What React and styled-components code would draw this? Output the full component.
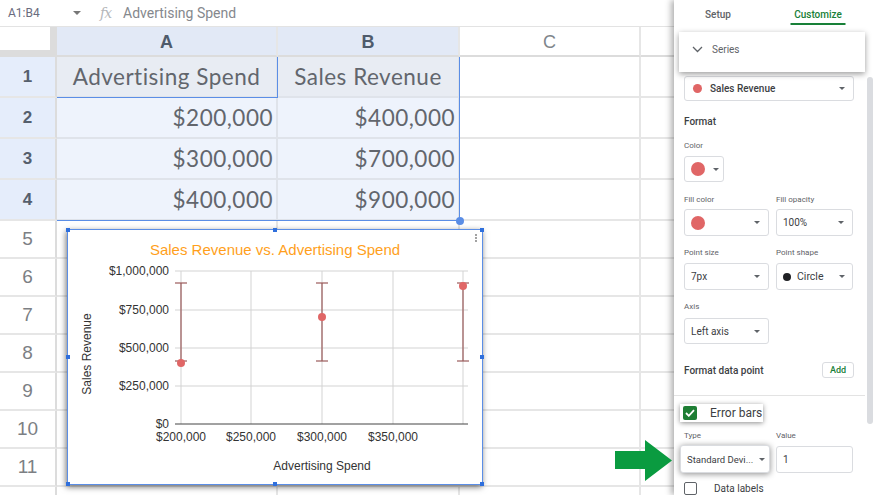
import React from "react";
import styled, { createGlobalStyle } from "styled-components";

const GlobalStyle = createGlobalStyle`
  html, body { margin: 0; padding: 0; width: 880px; height: 495px; overflow: hidden; background: #fff; }
  body { font-family: Roboto, "Liberation Sans", sans-serif; }
  * { box-sizing: border-box; }
`;

const Page = styled.div`
  display: flex;
  width: 880px;
  height: 495px;
  overflow: hidden;
  position: relative;
`;

const SheetArea = styled.div`
  flex: 1;
  min-width: 0;
  position: relative;
  overflow: hidden;
`;

const FormulaBar = styled.div`
  height: 27px;
  display: flex;
  align-items: center;
  border-bottom: 1px solid #e3e3e3;
  font-family: Roboto, "Liberation Sans", sans-serif;
`;

const NameBox = styled.div`
  width: 70px;
  padding-left: 8px;
  font-size: 12px;
  color: #6a6c7e;
`;

const Caret = styled.span`
  display: inline-block;
  flex: none;
  width: 0;
  height: 0;
  border-left: ${(p) => p.$size || 3}px solid transparent;
  border-right: ${(p) => p.$size || 3}px solid transparent;
  border-top: ${(p) => p.$size || 3}px solid ${(p) => p.$color || "#5f6368"};
`;

const NameCaret = styled.div`
  width: 30px;
  display: flex;
  padding-left: 3px;
`;

const Fx = styled.span`
  font-family: "DejaVu Serif", serif;
  font-style: italic;
  font-size: 14px;
  color: #b5b7ba;
  width: 23px;
  letter-spacing: -1px;
`;

const FormulaText = styled.span`
  font-size: 14px;
  color: #85888d;
`;

const Grid = styled.div`
  display: grid;
  grid-template-columns: 57px 221px 182px 181px 220px;
  grid-template-rows: 30px repeat(4, 41px) repeat(8, 38px);
`;

const Cell = styled.div`
  border-right: 2px solid #e6e6e6;
  border-bottom: 2px solid #e6e6e6;
  display: flex;
  align-items: center;
  overflow: hidden;
  white-space: nowrap;
`;

const Corner = styled(Cell)`
  background: #fff;
  border-right: 7px solid #dcdcdc;
  border-bottom: 7px solid #dcdcdc;
`;

const ColHead = styled(Cell)`
  justify-content: center;
  background: ${(p) => (p.$sel ? "#e2e9f6" : "#fff")};
  border-bottom-color: #dcdcdc;
  font-family: "Liberation Sans", Arial, sans-serif;
  font-size: 18px;
  font-weight: ${(p) => (p.$sel ? 700 : 400)};
  color: ${(p) => (p.$sel ? "#4f5b6b" : "#80868b")};
  padding-top: 2px;
`;

const RowHead = styled(Cell)`
  justify-content: center;
  background: ${(p) => (p.$sel ? "#e5edfb" : "#fff")};
  border-right-color: #dcdcdc;
  font-family: "Liberation Sans", Arial, sans-serif;
  font-size: ${(p) => (p.$sel ? 17 : 19)}px;
  font-weight: ${(p) => (p.$sel ? 700 : 400)};
  color: ${(p) => (p.$sel ? "#555f6d" : "#7c7f84")};
`;

const DataCell = styled(Cell)`
  background: ${(p) => (p.$tone === "head" ? "#e8ecf3" : p.$tone === "sel" ? "#eef3fc" : "#fff")};
  border-color: ${(p) => (p.$tone ? "#dfe3ea" : "#e6e6e6")};
  justify-content: ${(p) => (p.$align === "right" ? "flex-end" : "center")};
  padding-right: ${(p) => (p.$align === "right" ? 3 : 0)}px;
  font-family: Lato, "Open Sans", sans-serif;
  font-size: 22.5px;
  letter-spacing: 0.5px;
  color: #62666d;
`;

const Selection = styled.div`
  position: absolute;
  left: 57px;
  top: 57px;
  width: ${(p) => p.$w}px;
  height: ${(p) => p.$h}px;
  border-right: 1px solid #5b8ee6;
  border-bottom: 1px solid #5b8ee6;
  pointer-events: none;
`;

const FillDot = styled.div`
  position: absolute;
  left: 456px;
  top: 217px;
  width: 8px;
  height: 8px;
  border-radius: 50%;
  background: #5b8ee6;
`;

const ChartBox = styled.div`
  position: absolute;
  left: 67px;
  top: 229px;
  width: 416px;
  height: 256px;
  background: #fff;
  border: 1px solid #5b8ee6;
  box-shadow: -1px 2px 6px rgba(0, 0, 0, 0.55);
`;

const Handle = styled.div`
  position: absolute;
  width: 4px;
  height: 4px;
  background: #2f6fdc;
  left: ${(p) => p.$x}%;
  top: ${(p) => p.$y}%;
  transform: translate(-50%, -50%);
`;

const Panel = styled.div`
  width: 206px;
  flex: none;
  position: relative;
  background: #fff;
  box-shadow: -3px 0 6px rgba(0, 0, 0, 0.3);
  z-index: 2;
  font-family: Roboto, "Liberation Sans", sans-serif;
  color: #202124;
`;

const Tabs = styled.div`
  display: grid;
  grid-template-columns: 88px 112px;
  height: 32px;
`;

const Tab = styled.div`
  position: relative;
  text-align: center;
  font-size: 10px;
  font-weight: 500;
  line-height: 30px;
  color: ${(p) => (p.$active ? "#188038" : "#5f6368")};
  &::after {
    content: "";
    display: ${(p) => (p.$active ? "block" : "none")};
    position: absolute;
    left: 50%;
    transform: translateX(-50%);
    top: 23px;
    width: 55px;
    height: 2px;
    background: #188038;
  }
`;

const SeriesCard = styled.div`
  margin-left: 5px;
  width: 186px;
  height: 40px;
  display: flex;
  align-items: center;
  gap: 9px;
  padding-left: 13px;
  padding-bottom: 5px;
  background: #fff;
  box-shadow: 0 2px 6px rgba(0, 0, 0, 0.4);
  font-size: 10px;
  color: #5f6368;
  position: relative;
  z-index: 1;
`;

const Content = styled.div`
  padding: 4px 0 0 10px;
  width: 180px;
  display: flex;
  flex-direction: column;
`;

const Select = styled.div`
  height: ${(p) => p.$h || 27}px;
  width: ${(p) => p.$w}px;
  margin-left: ${(p) => p.$ml || 0}px;
  border: 1px solid #dadce0;
  border-radius: 3px;
  display: flex;
  align-items: center;
  gap: ${(p) => (p.$gap != null ? p.$gap : 8)}px;
  padding: 0 8px 0 ${(p) => p.$pl || 6}px;
  font-size: ${(p) => p.$fs || 10}px;
  font-weight: ${(p) => p.$fw || 400};
  color: #3c4043;
  background: #fff;
  box-shadow: ${(p) => (p.$hl ? "0 1px 6px rgba(0,0,0,0.45)" : "none")};
  white-space: nowrap;
  overflow: hidden;
  min-width: 0;
`;

const Spacer = styled.span`
  flex: 1;
`;

const Dot = styled.span`
  width: ${(p) => p.$d}px;
  height: ${(p) => p.$d}px;
  border-radius: 50%;
  background: ${(p) => p.$c};
  flex: none;
`;

const SectionTitle = styled.div`
  margin-top: ${(p) => p.$mt}px;
  height: 14px;
  line-height: 14px;
  font-size: 10px;
  font-weight: 500;
  color: #3c4043;
`;

const Label = styled.div`
  margin-top: ${(p) => p.$mt}px;
  height: 14px;
  line-height: 14px;
  font-size: 8px;
  color: #5f6368;
`;

const Pair = styled.div`
  display: grid;
  grid-template-columns: 85px 77px;
  column-gap: 7px;
  margin-top: ${(p) => p.$mt || 0}px;
  align-items: center;
`;

const ActionRow = styled.div`
  margin-top: ${(p) => p.$mt}px;
  height: 16px;
  width: 170px;
  display: flex;
  align-items: center;
  justify-content: space-between;
  font-size: 10px;
  font-weight: 500;
  color: #3c4043;
`;

const AddButton = styled.div`
  width: 32px;
  height: 16px;
  border: 1px solid #dadce0;
  border-radius: 3px;
  display: flex;
  align-items: center;
  justify-content: center;
  font-size: 9px;
  font-weight: 500;
  color: #188038;
`;

const Divider = styled.div`
  margin-top: ${(p) => p.$mt}px;
  margin-left: -10px;
  width: 191px;
  height: 1px;
  background: #e3e3e3;
`;

const CheckRow = styled.div`
  margin-top: ${(p) => p.$mt}px;
  margin-left: ${(p) => p.$ml || 0}px;
  height: ${(p) => p.$h}px;
  width: ${(p) => p.$w}px;
  display: flex;
  align-items: center;
  gap: ${(p) => p.$gap}px;
  padding-left: ${(p) => p.$pl || 0}px;
  font-size: ${(p) => p.$fs}px;
  color: #3c4043;
  background: #fff;
  box-shadow: ${(p) => (p.$hl ? "0 1px 5px rgba(0,0,0,0.45)" : "none")};
`;

const Box = styled.span`
  width: ${(p) => p.$s}px;
  height: ${(p) => p.$s}px;
  border-radius: 2px;
  flex: none;
  display: flex;
  align-items: center;
  justify-content: center;
  background: ${(p) => (p.$on ? "#1e7e34" : "#fff")};
  border: ${(p) => (p.$on ? "none" : "1px solid #5f6368")};
`;

const ScrollThumb = styled.div`
  position: absolute;
  right: 7px;
  top: 77px;
  width: 6px;
  height: 347px;
  border-radius: 3px;
  background: #dadce0;
`;

const ArrowWrap = styled.svg`
  position: absolute;
  left: 615px;
  top: 440px;
  z-index: 3;
`;

const Chart = () => {
  const xs = [114, 184, 255, 326, 396];
  const ys = [42, 81, 119, 157];
  const yl = ["$1,000,000", "$750,000", "$500,000", "$250,000"];
  const xl = ["$200,000", "$250,000", "$300,000", "$350,000"];
  const pts = [
    [114, 134],
    [255, 88],
    [396, 57],
  ];
  const font = '"Liberation Sans", Arial, sans-serif';
  return (
    <svg width="414" height="254" viewBox="1 1 414 254" style={{ display: "block" }}>
      <text x="208" y="26" textAnchor="middle" fontFamily={font} fontSize="15" fill="#ff9f1c">
        Sales Revenue vs. Advertising Spend
      </text>
      {ys.map((y) => (
        <line key={"h" + y} x1="108" x2="401" y1={y} y2={y} stroke="#d3d3d3" strokeWidth="1" />
      ))}
      {xs.map((x) => (
        <line key={"v" + x} x1={x} x2={x} y1="42" y2="195" stroke="#d3d3d3" strokeWidth="1" />
      ))}
      <line x1="108" x2="401" y1="195" y2="195" stroke="#444" strokeWidth="1" />
      {yl.map((t, i) => (
        <text key={t} x="102" y={ys[i] + 4} textAnchor="end" fontFamily={font} fontSize="12" fill="#333">
          {t}
        </text>
      ))}
      <text x="102" y="199" textAnchor="end" fontFamily={font} fontSize="12" fill="#333">
        $0
      </text>
      {xl.map((t, i) => (
        <text key={t} x={xs[i]} y="212" textAnchor="middle" fontFamily={font} fontSize="12" fill="#333">
          {t}
        </text>
      ))}
      <text
        x="0"
        y="0"
        transform="translate(24 125) rotate(-90)"
        textAnchor="middle"
        fontFamily={font}
        fontSize="12"
        fill="#333"
      >
        Sales Revenue
      </text>
      <text x="255" y="241" textAnchor="middle" fontFamily={font} fontSize="12" fill="#333">
        Advertising Spend
      </text>
      {pts.map(([x]) => (
        <g key={"e" + x} stroke="#9a5a5a" strokeWidth="1.2">
          <line x1={x} x2={x} y1="54" y2="132" />
          <line x1={x - 6} x2={x + 6} y1="54" y2="54" />
          <line x1={x - 6} x2={x + 6} y1="132" y2="132" />
        </g>
      ))}
      {pts.map(([x, y]) => (
        <circle key={"p" + x} cx={x} cy={y} r="4" fill="#e06666" />
      ))}
      <g fill="#777">
        <circle cx="409" cy="6" r="0.9" />
        <circle cx="409" cy="9" r="0.9" />
        <circle cx="409" cy="12" r="0.9" />
      </g>
    </svg>
  );
};

export default function App() {
  const rows = [];
  const dataRows = [
    ["Advertising Spend", "Sales Revenue"],
    ["$200,000", "$400,000"],
    ["$300,000", "$700,000"],
    ["$400,000", "$900,000"],
  ];
  for (let r = 1; r <= 12; r++) {
    const sel = r <= 4;
    rows.push(
      <RowHead key={"rh" + r} $sel={sel}>
        {r <= 11 ? r : ""}
      </RowHead>
    );
    if (sel) {
      const d = dataRows[r - 1];
      const tone = r === 1 ? "head" : "sel";
      const align = r === 1 ? "center" : "right";
      rows.push(
        <DataCell key={"a" + r} $tone={tone} $align={align}>
          {d[0]}
        </DataCell>,
        <DataCell key={"b" + r} $tone={tone} $align={align}>
          {d[1]}
        </DataCell>
      );
    } else {
      rows.push(<DataCell key={"a" + r} />, <DataCell key={"b" + r} />);
    }
    rows.push(<DataCell key={"c" + r} />, <DataCell key={"d" + r} />);
  }

  return (
    <>
      <GlobalStyle />
      <Page>
        <SheetArea>
          <FormulaBar>
            <NameBox>A1:B4</NameBox>
            <NameCaret>
              <Caret $size={4} $color="#777" />
            </NameCaret>
            <Fx>fx</Fx>
            <FormulaText>Advertising Spend</FormulaText>
          </FormulaBar>
          <Grid>
            <Corner />
            <ColHead $sel>A</ColHead>
            <ColHead $sel>B</ColHead>
            <ColHead>C</ColHead>
            <ColHead />
            {rows}
          </Grid>
          <Selection $w={221} $h={41} />
          <Selection $w={403} $h={164} />
          <FillDot />
          <ChartBox>
            <Chart />
            <Handle $x={0} $y={0} />
            <Handle $x={50} $y={0} />
            <Handle $x={100} $y={0} />
            <Handle $x={0} $y={50} />
            <Handle $x={100} $y={50} />
            <Handle $x={0} $y={100} />
            <Handle $x={50} $y={100} />
            <Handle $x={100} $y={100} />
          </ChartBox>
        </SheetArea>
        <Panel>
          <Tabs>
            <Tab>Setup</Tab>
            <Tab $active>Customize</Tab>
          </Tabs>
          <SeriesCard>
            <svg width="11" height="7" viewBox="0 0 11 7">
              <polyline points="1,1 5.5,5.5 10,1" fill="none" stroke="#5f6368" strokeWidth="1.3" />
            </svg>
            <span>Series</span>
          </SeriesCard>
          <Content>
            <Select $w={170} $h={25} $pl={8} $fw={500}>
              <Dot $d={9} $c="#e06666" />
              <span>Sales Revenue</span>
              <Spacer />
              <Caret />
            </Select>
            <SectionTitle $mt={14}>Format</SectionTitle>
            <Label $mt={10}>Color</Label>
            <Pair $mt={3}>
              <Select $w={40} $h={26} $pl={6}>
                <Dot $d={14} $c="#e06666" />
                <Caret />
              </Select>
            </Pair>
            <Pair $mt={11}>
              <Label $mt={0}>Fill color</Label>
              <Label $mt={0}>Fill opacity</Label>
            </Pair>
            <Pair $mt={2}>
              <Select $h={27}>
                <Dot $d={14} $c="#e06666" />
                <Spacer />
                <Caret />
              </Select>
              <Select $h={27}>
                <span>100%</span>
                <Spacer />
                <Caret />
              </Select>
            </Pair>
            <Pair $mt={10}>
              <Label $mt={0}>Point size</Label>
              <Label $mt={0}>Point shape</Label>
            </Pair>
            <Pair $mt={3}>
              <Select $h={27}>
                <span>7px</span>
                <Spacer />
                <Caret />
              </Select>
              <Select $h={27} $fs={10.5}>
                <Dot $d={8} $c="#202124" />
                <span style={{ marginLeft: -2 }}>Circle</span>
                <Spacer />
                <Caret />
              </Select>
            </Pair>
            <Label $mt={10}>Axis</Label>
            <Pair $mt={4}>
              <Select $h={26}>
                <span>Left axis</span>
                <Spacer />
                <Caret />
              </Select>
            </Pair>
            <ActionRow $mt={18}>
              <span>Format data point</span>
              <AddButton>Add</AddButton>
            </ActionRow>
            <Divider $mt={17} />
            <CheckRow $mt={8} $ml={-4} $h={18} $w={83} $gap={13} $pl={3} $fs={12} $hl>
              <Box $s={14} $on>
                <svg width="10" height="8" viewBox="0 0 10 8">
                  <polyline points="1,4 3.8,6.8 9,1.2" fill="none" stroke="#fff" strokeWidth="1.8" />
                </svg>
              </Box>
              <span>Error bars</span>
            </CheckRow>
            <Pair $mt={7}>
              <Label $mt={0}>Type</Label>
              <Label $mt={0}>Value</Label>
            </Pair>
            <Pair $mt={2}>
              <Select $h={28} $w={90} $ml={-4} $pl={6} $fs={9.5} $gap={3} $hl>
                <span>Standard Devi...</span>
                <Spacer />
                <Caret />
              </Select>
              <Select $h={27}>
                <span>1</span>
              </Select>
            </Pair>
            <CheckRow $mt={8} $h={14} $w={120} $gap={17} $fs={10}>
              <Box $s={13} />
              <span>Data labels</span>
            </CheckRow>
          </Content>
          <ScrollThumb />
        </Panel>
        <ArrowWrap width="57" height="41" viewBox="0 0 57 41">
          <polygon points="0,11 30,11 30,0 57,20.5 30,41 30,29 0,29" fill="#0a9b40" />
        </ArrowWrap>
      </Page>
    </>
  );
}
